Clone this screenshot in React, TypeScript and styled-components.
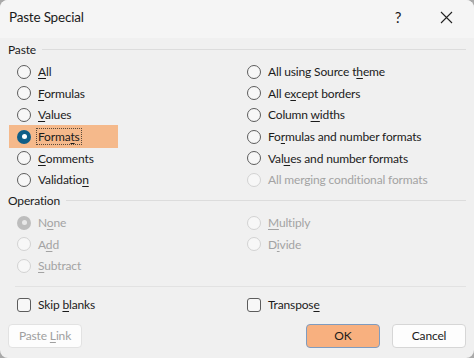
import React from "react";
import styled, { createGlobalStyle, css } from "styled-components";

const GlobalStyle = createGlobalStyle`
  html, body {
    margin: 0;
    padding: 0;
    background: #a9a9a9;
  }
  body {
    font-family: Lato, "Noto Sans", sans-serif;
    letter-spacing: -0.15px;
    -webkit-font-smoothing: antialiased;
  }
`;

const Dialog = styled.div`
  width: 474px;
  height: 358px;
  box-sizing: border-box;
  background: #f0f0f0;
  border-radius: 8px;
  overflow: hidden;
  display: flex;
  flex-direction: column;
  color: #1b1b1b;
`;

const TitleBar = styled.div`
  height: 38px;
  flex: none;
  display: flex;
  align-items: center;
  padding: 0 4px 4px 9px;
  box-sizing: border-box;
  background: #f5f5f5;
`;

const Title = styled.div`
  flex: 1;
  font-size: 13.5px;
  letter-spacing: -0.2px;
`;

const TitleButton = styled.div`
  width: 48px;
  height: 30px;
  display: flex;
  align-items: center;
  justify-content: center;
  font-size: 15px;
`;

const Body = styled.div`
  flex: 1;
  display: flex;
  flex-direction: column;
  padding: 0 8px;
`;

const GroupHeader = styled.div`
  display: flex;
  align-items: center;
  gap: 6px;
  height: 22px;
  font-size: 12px;
  &::after {
    content: "";
    flex: 1;
    height: 1px;
    background: #dcdcdc;
  }
`;

const Columns = styled.div`
  display: grid;
  grid-template-columns: 230px 1fr;
  padding-top: 1px;
`;

const Column = styled.div`
  display: flex;
  flex-direction: column;
`;

const Row = styled.div<{ $highlight?: boolean; $disabled?: boolean }>`
  height: 21.6px;
  display: flex;
  align-items: center;
  gap: 7px;
  padding-left: 9px;
  font-size: 12px;
  color: ${(p) => (p.$disabled ? "#a3a3a3" : "#1b1b1b")};
  ${(p) =>
    p.$highlight &&
    css`
      width: 109px;
      margin-left: 1px;
      padding-left: 8px;
      box-sizing: border-box;
      background: #f5b98b;
      height: 23px;
      margin-top: -0.7px;
      margin-bottom: -0.7px;
    `}
`;

const Radio = styled.span<{ $checked?: boolean; $disabled?: boolean }>`
  width: 14px;
  height: 14px;
  box-sizing: border-box;
  border-radius: 50%;
  flex: none;
  position: relative;
  border: 1px solid ${(p) => (p.$disabled ? "#d2d2d2" : "#5c5c5c")};
  background: #f7f7f7;
  ${(p) =>
    p.$checked &&
    css`
      border: none;
      background: ${p.$disabled ? "#bdbdbd" : "#0f5e87"};
      &::after {
        content: "";
        position: absolute;
        left: 4.5px;
        top: 4.5px;
        width: 5px;
        height: 5px;
        border-radius: 50%;
        background: ${p.$disabled ? "#e8e8e8" : "#ffffff"};
      }
    `}
`;

const Label = styled.span<{ $focus?: boolean }>`
  line-height: 15px;
  padding: 0 1px;
  border: 1px dotted ${(p) => (p.$focus ? "#5a4a3a" : "transparent")};
  margin-left: -2px;
`;

const Key = styled.u`
  text-underline-offset: 2px;
`;

const OpGroup = styled.div`
  margin-top: -1.6px;
`;

const Divider = styled.div`
  height: 1px;
  background: #e2e2e2;
  margin: 9px 0 0 7px;
`;

const CheckRow = styled.div`
  display: grid;
  grid-template-columns: 230px 1fr;
  padding-left: 9px;
  height: 36px;
  align-items: center;
`;

const CheckItem = styled.div`
  display: flex;
  align-items: center;
  gap: 7px;
  font-size: 12px;
`;

const Checkbox = styled.span`
  width: 14px;
  height: 14px;
  box-sizing: border-box;
  border: 1px solid #5c5c5c;
  border-radius: 3px;
  background: #f7f7f7;
  flex: none;
`;

const ButtonBar = styled.div`
  display: flex;
  align-items: center;
  gap: 12px;
  padding-top: 1px;
`;

const Spacer = styled.div`
  flex: 1;
`;

const Button = styled.div<{ $primary?: boolean; $disabled?: boolean }>`
  width: 74px;
  height: 24px;
  box-sizing: border-box;
  border-radius: 4px;
  display: flex;
  align-items: center;
  justify-content: center;
  font-size: 12px;
  background: ${(p) => (p.$primary ? "#f8b07f" : "#fdfdfd")};
  border: 1px solid
    ${(p) => (p.$primary ? "#7f9cc0" : p.$disabled ? "#e2e2e2" : "#d6d6d6")};
  color: ${(p) => (p.$disabled ? "#a0a0a0" : "#1b1b1b")};
`;

type Opt = { pre: string; key?: string; post?: string; checked?: boolean; disabled?: boolean; hl?: boolean };

const leftPaste: Opt[] = [
  { pre: "", key: "A", post: "ll" },
  { pre: "", key: "F", post: "ormulas" },
  { pre: "", key: "V", post: "alues" },
  { pre: "Forma", key: "t", post: "s", checked: true, hl: true },
  { pre: "", key: "C", post: "omments" },
  { pre: "Validatio", key: "n", post: "" },
];

const rightPaste: Opt[] = [
  { pre: "All using Source t", key: "h", post: "eme" },
  { pre: "All e", key: "x", post: "cept borders" },
  { pre: "Column ", key: "w", post: "idths" },
  { pre: "Fo", key: "r", post: "mulas and number formats" },
  { pre: "Val", key: "u", post: "es and number formats" },
  { pre: "All merging conditional formats", disabled: true },
];

const leftOp: Opt[] = [
  { pre: "N", key: "o", post: "ne", checked: true, disabled: true },
  { pre: "A", key: "d", post: "d", disabled: true },
  { pre: "", key: "S", post: "ubtract", disabled: true },
];

const rightOp: Opt[] = [
  { pre: "", key: "M", post: "ultiply", disabled: true },
  { pre: "D", key: "i", post: "vide", disabled: true },
];

const Option: React.FC<{ o: Opt }> = ({ o }) => (
  <Row $highlight={o.hl} $disabled={o.disabled}>
    <Radio $checked={o.checked} $disabled={o.disabled} />
    <Label $focus={o.hl}>
      {o.pre}
      {o.key && <Key>{o.key}</Key>}
      {o.post}
    </Label>
  </Row>
);

const App: React.FC = () => (
  <>
    <GlobalStyle />
    <Dialog>
      <TitleBar>
        <Title>Paste Special</Title>
        <TitleButton>?</TitleButton>
        <TitleButton>
          <svg width="13" height="13" viewBox="0 0 13 13">
            <path d="M1 1L12 12M12 1L1 12" stroke="#222" strokeWidth="1.1" fill="none" />
          </svg>
        </TitleButton>
      </TitleBar>
      <Body>
        <GroupHeader>Paste</GroupHeader>
        <Columns>
          <Column>
            {leftPaste.map((o, i) => (
              <Option key={i} o={o} />
            ))}
          </Column>
          <Column>
            {rightPaste.map((o, i) => (
              <Option key={i} o={o} />
            ))}
          </Column>
        </Columns>
        <OpGroup>
          <GroupHeader>Operation</GroupHeader>
          <Columns>
            <Column>
              {leftOp.map((o, i) => (
                <Option key={i} o={o} />
              ))}
            </Column>
            <Column>
              {rightOp.map((o, i) => (
                <Option key={i} o={o} />
              ))}
            </Column>
          </Columns>
          <Divider />
        </OpGroup>
        <CheckRow>
          <CheckItem>
            <Checkbox />
            <span>
              Skip <Key>b</Key>lanks
            </span>
          </CheckItem>
          <CheckItem>
            <Checkbox />
            <span>
              Transpos<Key>e</Key>
            </span>
          </CheckItem>
        </CheckRow>
        <ButtonBar>
          <Button $disabled>
            <span>
              Paste <Key>L</Key>ink
            </span>
          </Button>
          <Spacer />
          <Button $primary>OK</Button>
          <Button>Cancel</Button>
        </ButtonBar>
      </Body>
    </Dialog>
  </>
);

export default App;
